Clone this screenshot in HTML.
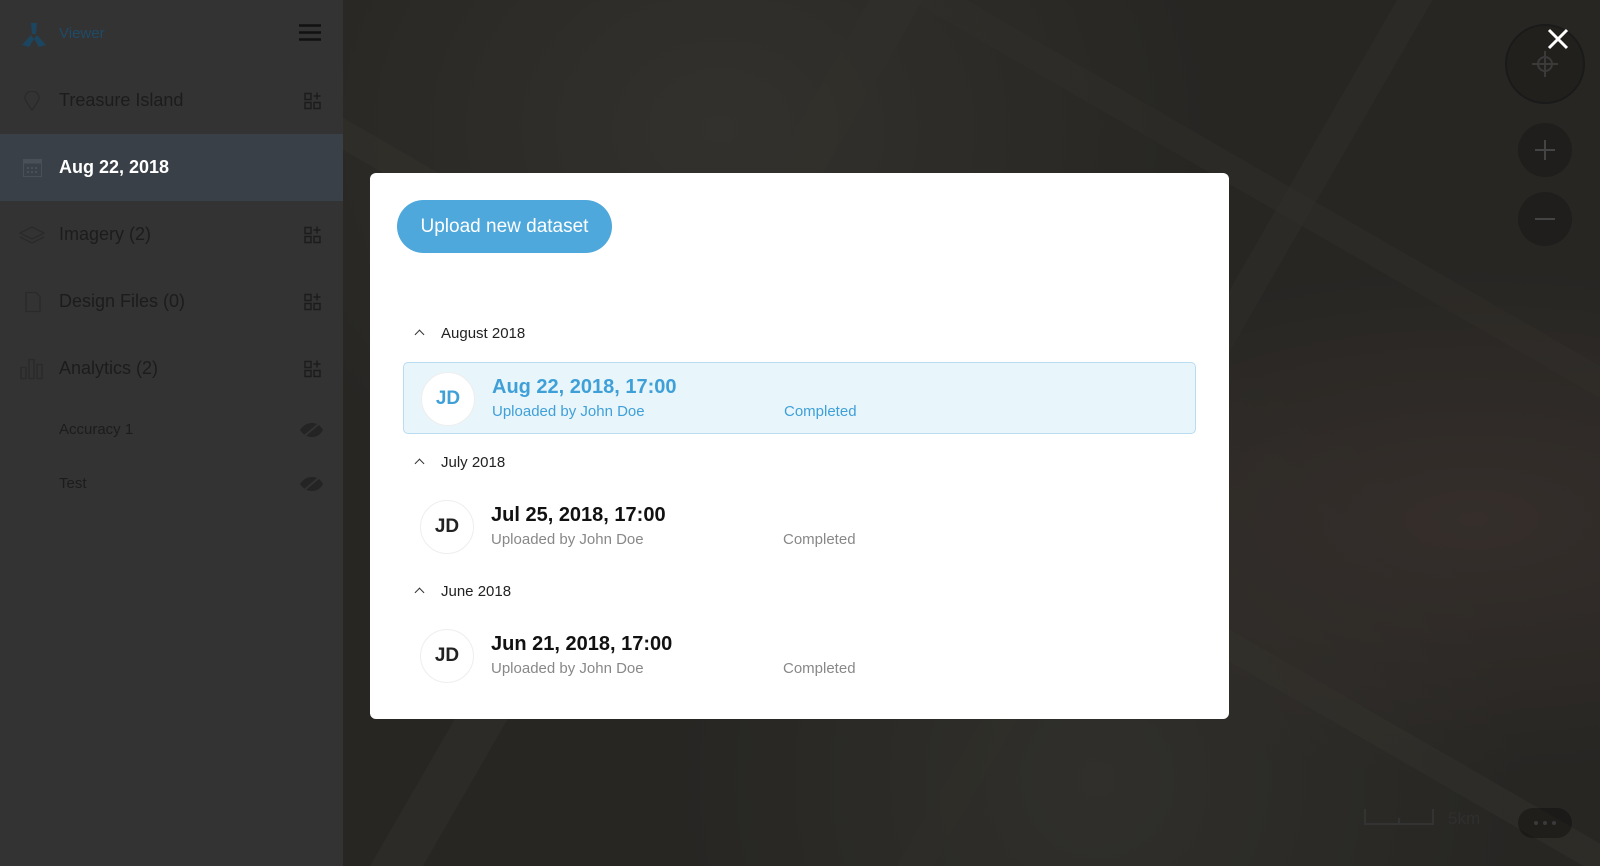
<!DOCTYPE html>
<html><head><meta charset="utf-8"><style>
*{margin:0;padding:0;box-sizing:border-box}
body{width:1600px;height:866px;overflow:hidden;font-family:"Liberation Sans",sans-serif;background:#2a2926;position:relative}
.map{position:absolute;left:343px;top:0;width:1257px;height:866px;overflow:hidden;
background:
linear-gradient(120deg,transparent 0 30%,rgba(50,48,43,.5) 30% 33%,transparent 33% 60%,rgba(48,46,41,.5) 60% 62%,transparent 62%),
linear-gradient(30deg,transparent 0 45%,rgba(52,50,44,.45) 45% 47%,transparent 47% 75%,rgba(50,47,42,.4) 75% 77%,transparent 77%),
radial-gradient(ellipse at 30% 15%,#33312d 0,transparent 40%),
radial-gradient(ellipse at 90% 60%,#352e2b 0,transparent 35%),
radial-gradient(ellipse at 60% 90%,#302f2b 0,transparent 40%),
#272623}
.side{position:absolute;left:0;top:0;width:343px;height:866px;background:#333333}
.row{position:absolute;left:0;width:343px;height:67px;color:#1c1c1c;font-size:18px;display:flex;align-items:center;padding-left:59px}
.row.sel{background:#3a4047;color:#fff;font-weight:bold}
.ico{position:absolute;left:20px;top:50%;transform:translateY(-50%)}
.add{position:absolute;right:22px;top:50%;transform:translateY(-50%)}
.sub{position:absolute;left:59px;color:#1c1c1c;font-size:15px}
.modal{position:absolute;left:370px;top:173px;width:859px;height:546px;background:#fff;border-radius:6px}
.btn{position:absolute;left:27px;top:27px;width:215px;height:53px;border-radius:27px;background:#4ea8dc;color:#fff;font-size:19px;display:flex;align-items:center;justify-content:center}
.hd{position:absolute;left:71px;font-size:15px;color:#222}
.hd:before{content:"";position:absolute;left:-25px;top:6px;width:6px;height:6px;border-left:1.5px solid #333;border-top:1.5px solid #333;transform:rotate(45deg)}
.it{position:absolute;left:33px;width:793px;height:72px}
.it.sel{background:#e8f5fb;border:1px solid #b9dcf0;border-radius:5px}
.av{position:absolute;left:17px;top:9px;width:54px;height:54px;border-radius:50%;background:#fff;border:1px solid #eee;display:flex;align-items:center;justify-content:center;font-size:19px;color:#222;font-weight:bold}
.t{position:absolute;left:88px;top:13px;font-size:20px;font-weight:bold;color:#111}
.s{position:absolute;left:88px;top:40px;font-size:15px;color:#888}
.c{position:absolute;left:380px;top:40px;font-size:15px;color:#888}
.sel .av,.sel .t,.sel .s,.sel .c{color:#3fa0d8}
</style></head><body>
<div class="map"></div>
<div class="side">
 <div class="row" style="top:0;height:67px;font-size:15px;color:#1f4a66">
  <svg class="ico" width="28" height="26" viewBox="0 0 28 26"><path d="M11 2h6l-1 11h-4z M2 24l9-10 3 4-5 8z M26 24l-9-10-3 4 5 8z" fill="#1c4560"/></svg>
  Viewer
  <svg style="position:absolute;right:22px;top:24px" width="22" height="17"><path d="M0 1.5h22M0 8.5h22M0 15.5h22" stroke="#111" stroke-width="2.5"/></svg>
 </div>
 <div class="row" style="top:67px">
  <svg class="ico" style="left:24px" width="16" height="20"><path d="M8 19C3 12 1 9 1 7a7 7 0 0 1 14 0c0 2-2 5-7 12z" stroke="#2a2a2a" fill="none" stroke-width="1.3"/></svg>
  Treasure Island
  <svg class="add" width="17" height="17"><g stroke="#1c1c1c" stroke-width="1.5" fill="none"><rect x="1" y="1" width="6" height="6"/><rect x="1" y="10" width="6" height="6"/><rect x="10" y="10" width="6" height="6"/><path d="M13 0v7M9.5 3.5h7"/></g></svg>
 </div>
 <div class="row sel" style="top:134px">
  <svg class="ico" style="left:23px" width="19" height="18"><rect x="0.5" y="0.5" width="18" height="17" fill="none" stroke="#4a5058"/><rect x="0.5" y="0.5" width="18" height="4" fill="#4a5058"/><g fill="#4a5058"><rect x="4" y="8" width="2" height="2"/><rect x="8" y="8" width="2" height="2"/><rect x="12" y="8" width="2" height="2"/><rect x="4" y="12" width="2" height="2"/><rect x="8" y="12" width="2" height="2"/><rect x="12" y="12" width="2" height="2"/></g></svg>
  Aug 22, 2018
 </div>
 <div class="row" style="top:201px">
  <svg class="ico" style="left:19px" width="26" height="20"><path d="M13 2 25 8 13 14 1 8z M1 12l12 6 12-6" stroke="#2a2a2a" fill="none" stroke-width="1.3"/></svg>
  Imagery (2)
  <svg class="add" width="17" height="17"><g stroke="#1c1c1c" stroke-width="1.5" fill="none"><rect x="1" y="1" width="6" height="6"/><rect x="1" y="10" width="6" height="6"/><rect x="10" y="10" width="6" height="6"/><path d="M13 0v7M9.5 3.5h7"/></g></svg>
 </div>
 <div class="row" style="top:268px">
  <svg class="ico" style="left:25px" width="16" height="21"><path d="M1 1h10l4 4v15H1z" stroke="#2a2a2a" fill="none" stroke-width="1.3"/></svg>
  Design Files (0)
  <svg class="add" width="17" height="17"><g stroke="#1c1c1c" stroke-width="1.5" fill="none"><rect x="1" y="1" width="6" height="6"/><rect x="1" y="10" width="6" height="6"/><rect x="10" y="10" width="6" height="6"/><path d="M13 0v7M9.5 3.5h7"/></g></svg>
 </div>
 <div class="row" style="top:335px">
  <svg class="ico" width="24" height="21"><g stroke="#2a2a2a" fill="none" stroke-width="1.3"><rect x="1" y="9" width="5" height="11"/><rect x="9" y="1" width="5" height="19"/><rect x="17" y="6" width="5" height="14"/></g></svg>
  Analytics (2)
  <svg class="add" width="17" height="17"><g stroke="#1c1c1c" stroke-width="1.5" fill="none"><rect x="1" y="1" width="6" height="6"/><rect x="1" y="10" width="6" height="6"/><rect x="10" y="10" width="6" height="6"/><path d="M13 0v7M9.5 3.5h7"/></g></svg>
 </div>
 <div class="sub" style="top:421px">Accuracy 1</div>
 <svg style="position:absolute;left:299px;top:421px" width="25" height="18"><path d="M1 9C5 3 10 2 13 2s8 1 11 7c-3 6-8 7-11 7S5 15 1 9z" fill="#242424"/><path d="M3 17 22 1" stroke="#333" stroke-width="2"/></svg>
 <div class="sub" style="top:475px">Test</div>
 <svg style="position:absolute;left:299px;top:475px" width="25" height="18"><path d="M1 9C5 3 10 2 13 2s8 1 11 7c-3 6-8 7-11 7S5 15 1 9z" fill="#242424"/><path d="M3 17 22 1" stroke="#333" stroke-width="2"/></svg>
</div>

<!-- map controls -->
<svg style="position:absolute;left:1500px;top:0" width="100" height="866">
 <circle cx="45" cy="64" r="39" fill="rgba(0,0,0,.15)" stroke="#1a1a1a" stroke-width="2"/>
 <circle cx="45" cy="64" r="7" fill="none" stroke="#3a3a3a" stroke-width="2"/>
 <path d="M32 64h26M45 51v26" stroke="#3a3a3a" stroke-width="2"/>
 <path d="M49 30l18 18M67 30 49 48" stroke="#fff" stroke-width="3"/>
 <circle cx="45" cy="150" r="27" fill="rgba(0,0,0,.2)"/>
 <path d="M35 150h20M45 140v20" stroke="#444" stroke-width="2"/>
 <circle cx="45" cy="219" r="27" fill="rgba(0,0,0,.2)"/>
 <path d="M35 219h20" stroke="#444" stroke-width="2"/>
 <rect x="18" y="808" width="54" height="30" rx="15" fill="rgba(0,0,0,.3)"/>
 <g fill="#3a3a3a"><circle cx="36" cy="823" r="2"/><circle cx="45" cy="823" r="2"/><circle cx="54" cy="823" r="2"/></g>
</svg>
<svg style="position:absolute;left:1364px;top:806px" width="120" height="24"><path d="M1 3v15h68V3M35 12v6" stroke="#333" stroke-width="2" fill="none"/><text x="84" y="18" font-family="Liberation Sans" font-size="17" fill="#2f2f2f">5km</text></svg>

<div class="modal">
 <div class="btn">Upload new dataset</div>
 <div class="hd" style="top:152px">August 2018</div>
 <div class="it sel" style="top:189px"><div class="av">JD</div><div class="t">Aug 22, 2018, 17:00</div><div class="s">Uploaded by John Doe</div><div class="c">Completed</div></div>
 <div class="hd" style="top:281px">July 2018</div>
 <div class="it" style="top:318px"><div class="av">JD</div><div class="t">Jul 25, 2018, 17:00</div><div class="s">Uploaded by John Doe</div><div class="c">Completed</div></div>
 <div class="hd" style="top:410px">June 2018</div>
 <div class="it" style="top:447px"><div class="av">JD</div><div class="t">Jun 21, 2018, 17:00</div><div class="s">Uploaded by John Doe</div><div class="c">Completed</div></div>
</div>
</body></html>
